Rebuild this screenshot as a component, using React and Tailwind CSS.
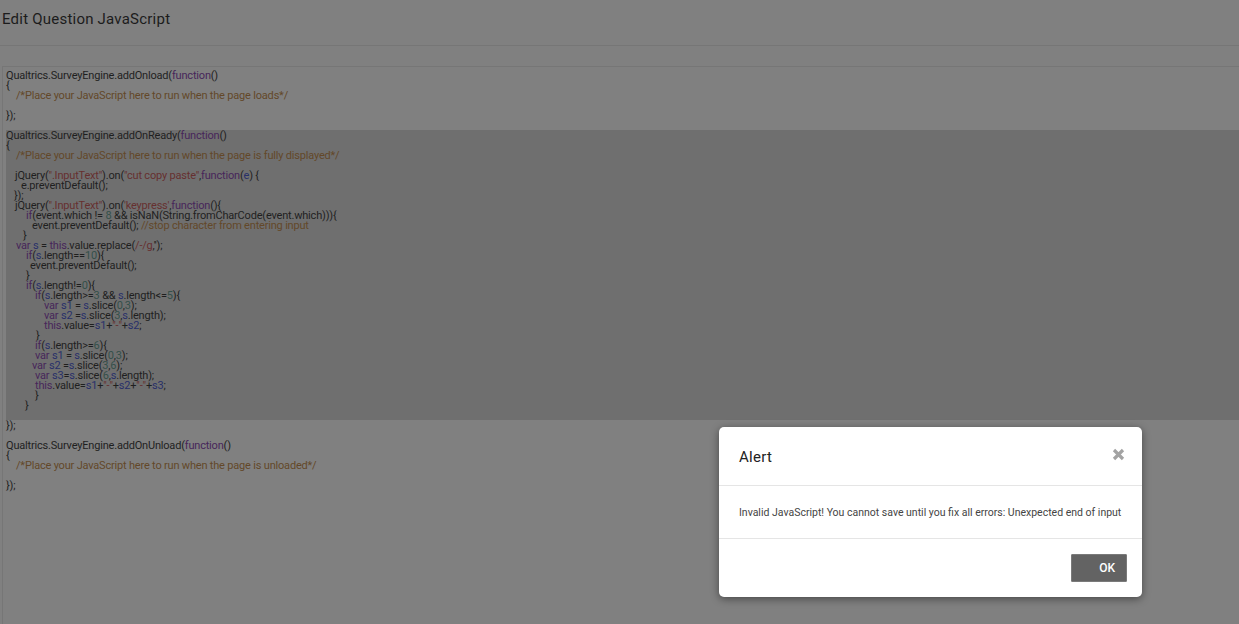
const K = "#1f1f1f", P = "#47265a", O = "#634829", R = "#663030", B = "#28306a", G = "#34504a";
const L = (pad, ...t) => ({ pad, t });
const lines = [
  L(0, ["Qualtrics.SurveyEngine.addOnload(", K], ["function", P], ["()", K]),
  L(0, ["{", K]),
  L(10, ["/*Place your JavaScript here to run when the page loads*/", O]),
  L(0, ["\u00a0", K]),
  L(0, ["});", K]),
  L(0, ["\u00a0", K]),
  L(0, ["Qualtrics.SurveyEngine.addOnReady(", K], ["function", P], ["()", K]),
  L(0, ["{", K]),
  L(10, ["/*Place your JavaScript here to run when the page is fully displayed*/", O]),
  L(0, ["\u00a0", K]),
  L(9, ["jQuery(", K], ["\".InputText\"", R], [").on(", K], ["\"cut copy paste\"", R], [",", K], ["function", P], ["(", K], ["e", B], [") {", K]),
  L(15, ["e.preventDefault();", K]),
  L(8, ["});", K]),
  L(9, ["jQuery(", K], ["\".InputText\"", R], [").on(", K], ["'keypress'", R], [",", K], ["function", P], ["(){", K]),
  L(20, ["if", P], ["(event.which != ", K], ["8", G], [" && isNaN(String.fromCharCode(event.which))){", K]),
  L(26, ["event.preventDefault(); ", K], ["//stop character from entering input", O]),
  L(17, ["}", K]),
  L(10, ["var ", P], ["s", B], [" = ", K], ["this", P], [".value.replace(", K], ["/-/g", R], [",'');", K]),
  L(20, ["if", P], ["(", K], ["s", B], [".length==", K], ["10", G], ["){", K]),
  L(24, ["event.preventDefault();", K]),
  L(20, ["}", K]),
  L(20, ["if", P], ["(", K], ["s", B], [".length!=", K], ["0", G], ["){", K]),
  L(29, ["if", P], ["(", K], ["s", B], [".length>=", K], ["3", G], [" && ", K], ["s", B], [".length<=", K], ["5", G], ["){", K]),
  L(38, ["var ", P], ["s1", B], [" = ", K], ["s", B], [".slice(", K], ["0", G], [",", K], ["3", G], [");", K]),
  L(38, ["var ", P], ["s2", B], [" =", K], ["s", B], [".slice(", K], ["3", G], [",", K], ["s", B], [".length);", K]),
  L(38, ["this", P], [".value=", K], ["s1", B], ["+", K], ["\"-\"", R], ["+", K], ["s2", B], [";", K]),
  L(30, ["}", K]),
  L(29, ["if", P], ["(", K], ["s", B], [".length>=", K], ["6", G], ["){", K]),
  L(29, ["var ", P], ["s1", B], [" = ", K], ["s", B], [".slice(", K], ["0", G], [",", K], ["3", G], [");", K]),
  L(26, ["var ", P], ["s2", B], [" =", K], ["s", B], [".slice(", K], ["3", G], [",", K], ["6", G], [");", K]),
  L(29, ["var ", P], ["s3", B], ["=", K], ["s", B], [".slice(", K], ["6", G], [",", K], ["s", B], [".length);", K]),
  L(29, ["this", P], [".value=", K], ["s1", B], ["+", K], ["\"-\"", R], ["+", K], ["s2", B], ["+", K], ["\"-\"", R], ["+", K], ["s3", B], [";", K]),
  L(29, ["}", K]),
  L(19, ["}", K]),
  L(0, ["\u00a0", K]),
  L(0, ["});", K]),
  L(0, ["\u00a0", K]),
  L(0, ["Qualtrics.SurveyEngine.addOnUnload(", K], ["function", P], ["()", K]),
  L(0, ["{", K]),
  L(10, ["/*Place your JavaScript here to run when the page is unloaded*/", O]),
  L(0, ["\u00a0", K]),
  L(0, ["});", K]),
];

function Line({ line, selected }) {
  return (
    <div className={`h-[10px] whitespace-pre pt-px leading-[10px] ${selected ? "bg-[#6f6f6f]" : ""}`}>
      <span style={{ paddingLeft: line.pad }}>
        {line.t.map(([text, color], i) => (
          <span key={i} style={{ color }}>{text}</span>
        ))}
      </span>
    </div>
  );
}

export default function App() {
  return (
    <div className="relative h-[624px] w-[1239px] overflow-hidden bg-[#808080] font-['Roboto',sans-serif]">
      <h1 className="h-[45px] pl-[2px] pt-[9px] text-[15px] font-normal leading-[20px] tracking-[0.22px] text-[#1c1c1c]">
        Edit Question JavaScript
      </h1>
      <div className="h-[21px] border-t border-[#767676]" />
      <div className="ml-[2px] h-[558px] border-l border-t border-[#767676] pl-[3px] pt-[3px] text-[11px] tracking-[-0.19px]">
        {lines.map((line, i) => (
          <Line key={i} line={line} selected={i >= 6 && i <= 34} />
        ))}
      </div>

      <div role="dialog" className="absolute left-[719px] top-[427px] w-[423px] rounded-[5px] bg-white shadow-[0_2px_8px_rgba(0,0,0,0.45)]">
        <div className="flex h-[59px] items-center justify-between border-b border-[#e5e5e5] pl-[20px] pr-[17px]">
          <span className="pt-[2px] text-[15px] leading-[20px] tracking-[0.3px] text-[#222222]">Alert</span>
          <svg width="13" height="13" viewBox="0 0 13 13" className="mb-[3px]" aria-label="Close">
            <path d="M2 2 L11 11 M11 2 L2 11" stroke="#a3a3a3" strokeWidth="3.2" />
          </svg>
        </div>
        <div className="flex h-[53px] items-center border-b border-[#e5e5e5] pl-[20px] pt-[2px] text-[10.5px] text-[#444444]">
          Invalid JavaScript! You cannot save until you fix all errors: Unexpected end of input
        </div>
        <div className="flex h-[58px] items-center justify-end pr-[15px]">
          <button className="flex h-[28px] w-[56px] items-center justify-end rounded-[1px] border border-[#7a7a7a] bg-[#636363] pr-[11px] text-[12px] font-medium text-white">
            OK
          </button>
        </div>
      </div>
    </div>
  );
}
